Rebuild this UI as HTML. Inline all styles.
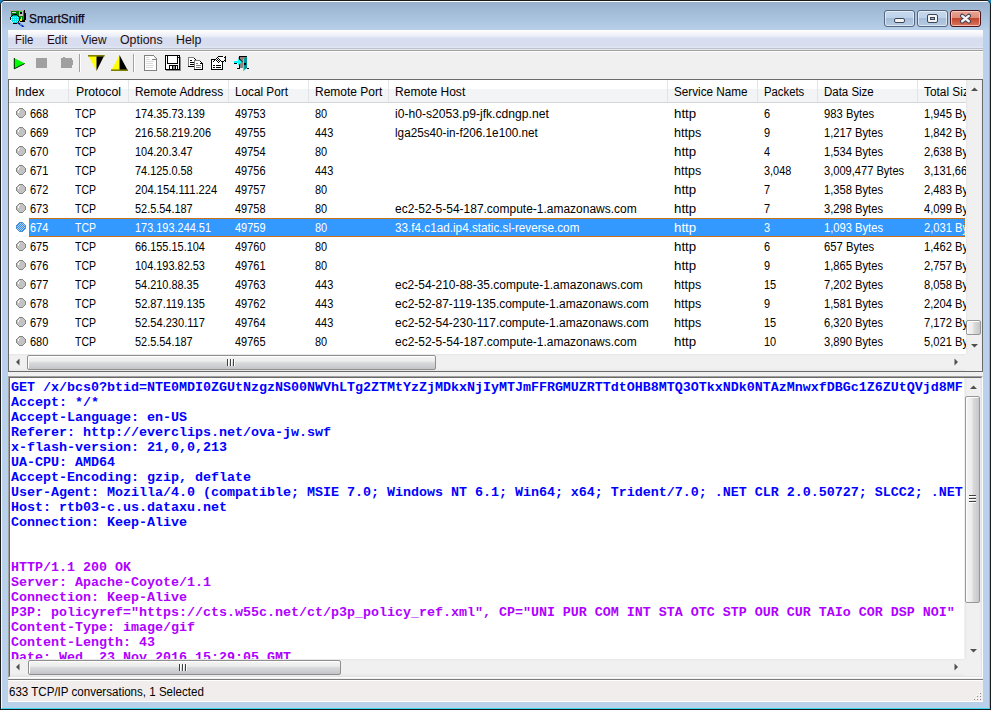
<!DOCTYPE html>
<html><head><meta charset="utf-8">
<style>
*{margin:0;padding:0;box-sizing:border-box}
html,body{width:991px;height:710px;overflow:hidden;background:#1787c6}
body{position:relative;font-family:"Liberation Sans",sans-serif;font-size:12px;color:#000}
.a{position:absolute;transform-origin:0 0}
#win{left:0;top:0;width:991px;height:710px;background:#1b1b1b;border-radius:5px 5px 0 0}
#frm{left:1px;top:1px;width:989px;height:708px;background:#b9d1ea;border-top:1px solid #fff;border-left:1px solid #f4f8fc;border-right:1px solid #3ad8f0;border-bottom:1px solid #3ad8f0;border-radius:4px 4px 0 0}
#title{left:2px;top:2px;width:987px;height:28px;border-radius:2px 2px 0 0;background:linear-gradient(#97b1ce,#b7cfe8)}
#menubar{left:8px;top:30px;width:975px;height:21px;background:linear-gradient(#fff 0,#f9fafd 2px,#eef1f8 5px,#e6eaf5 7px,#d8deef 8px,#d8deef 16px,#dfe5f3 17px,#dfe5f3 18px,#bcc2d0 18px,#bcc2d0 19px,#e9e9e9 19px,#e9e9e9 20px,#a0a0a0 20px)}
#toolbar{left:8px;top:51px;width:975px;height:28px;background:#f0f0f0;border-top:1px solid #fff}
.mi{top:33px;height:16px;line-height:16px;color:#1e0e14}
.ttl{font-size:12px;color:#0c0418;line-height:14px;-webkit-text-stroke:0.25px #0c0418}
.cb{top:10px;width:31px;height:17px;border:1px solid #56667e;border-radius:3px;background:linear-gradient(#c6d8ec 0,#bdd2ea 7px,#a5bdd9 7px,#b5cbe3 15px);box-shadow:inset 0 0 0 1px rgba(255,255,255,.55)}
.cbx{border-color:#4a1418;background:linear-gradient(#e9a595 0,#de8c7a 7px,#c0432a 7px,#d9765e 15px);box-shadow:inset 0 0 0 1px rgba(255,220,210,.7)}
/* list */
#list{left:8px;top:79px;width:975px;height:293px;border:1px solid #6a6a6a;background:#fff;overflow:hidden}
.hdr{left:9px;top:80px;width:957px;height:23px;background:linear-gradient(#fff 0,#fff 9px,#f3f4f6 9px,#f3f4f6 22px,#d5d5d5 22px)}
.hsep{top:80px;width:1px;height:22px;background:#e3e4e6}
.ht{transform-origin:0 0;top:85px;line-height:14px;height:14px;white-space:nowrap}
.rt{transform-origin:0 0;line-height:19px;height:19px;white-space:nowrap;top:0}
.st{color:#fff}
.selrow{left:29px;width:936px;height:19px;background:#3399ff;outline:1px dotted #c46a10;outline-offset:-1px}
.bul{left:16px;width:10px;height:10px}
.clipl{left:9px;top:80px;width:956px;height:274px;overflow:hidden}
/* scrollbars */
.vsb{width:17px;background:linear-gradient(90deg,#e6e6e6,#f0f0f0 2px,#f0f0f0 15px,#e8e8e8)}
.hsb{height:16px;background:linear-gradient(#e6e6e6,#f0f0f0 2px,#f0f0f0 14px,#e8e8e8)}
.vth{width:15px;border:1px solid #979797;border-radius:2px;background:linear-gradient(90deg,#f4f4f4,#ececec 45%,#dadada 55%,#c6c7ca);box-shadow:inset 1px 1px 0 #fff}
.hth{height:15px;border:1px solid #8f8f8f;border-radius:2px;background:linear-gradient(#f5f5f5,#ececec 40%,#dadbdd 50%,#c3c4c8);box-shadow:inset 1px 1px 0 #fff}
.corner{background:#f0f0f0}
/* text pane */
#tp{left:8px;top:376px;width:975px;height:302px;background:#fff;border-top:1px solid #a0a0a0;border-left:1px solid #a0a0a0;border-right:1px solid #fff;border-bottom:1px solid #fff}
#tpi{left:9px;top:377px;width:973px;height:300px;border-top:1px solid #696969;border-left:1px solid #696969;border-right:1px solid #e3e3e3;border-bottom:1px solid #e3e3e3}
.tclip{left:10px;top:378px;width:954px;height:281px;overflow:hidden}
pre{position:absolute;left:1px;top:2px;font-family:"Liberation Mono",monospace;font-weight:bold;font-size:13.333px;line-height:15px;color:#0000ff;white-space:pre}
.pu{color:#b000ff}
#status{left:8px;top:679px;width:975px;height:23px;background:#f0edec;border-top:1px solid #7c7c7c;border-bottom:1px solid #fff;box-shadow:inset 0 1px 0 #fff}
.stt{left:10px;top:684px;line-height:16px}
</style></head><body>
<div id="win" class="a"></div>
<div id="frm" class="a"></div>
<div id="title" class="a"></div>
<svg class="a" style="left:9px;top:9px" width="18" height="18" viewBox="0 0 18 18" shape-rendering="crispEdges">
<defs><pattern id="lensp" width="2" height="2" patternUnits="userSpaceOnUse"><rect width="2" height="2" fill="#00e4ee"/><rect width="1" height="1" fill="#ffffff"/></pattern></defs>
<rect x="1" y="1" width="14" height="1" fill="#b8a4a8"/>
<rect x="2" y="2" width="13" height="10" fill="#008000"/>
<rect x="15" y="1" width="1" height="12" fill="#000"/><rect x="16" y="4" width="1" height="7" fill="#000"/>
<rect x="10" y="2" width="4" height="5" fill="#c8c0c0"/>
<rect x="10" y="2" width="3" height="1" fill="#00ff00"/>
<rect x="11" y="3" width="2" height="2" fill="#000"/>
<rect x="14" y="2" width="1" height="9" fill="#00a000"/>
<rect x="2" y="3" width="1" height="1" fill="#ff0000"/><rect x="3" y="3" width="4" height="1" fill="#d8d0d8"/>
<rect x="12" y="8" width="1" height="3" fill="#c8c0c0"/>
<rect x="11" y="10" width="2" height="3" fill="#000"/><rect x="11" y="10" width="2" height="2" fill="#ffee00"/>
<rect x="12" y="12" width="4" height="1" fill="#000"/><rect x="13" y="11" width="2" height="1" fill="#000"/>
<path d="M4 5H8V6H9V7H10V8H11V12H10V13H9V14H8V15H4V14H3V13H2V12H1V8H2V7H3V6H4Z" fill="#000"/>
<path d="M4 6H8V7H9V8H10V12H9V13H8V14H4V13H3V12H2V8H3V7H4Z" fill="url(#lensp)"/>
<rect x="4" y="6" width="4" height="1" fill="#008888"/>
<rect x="1" y="11" width="1" height="1" fill="#fff"/><rect x="2" y="12" width="1" height="1" fill="#fff"/><rect x="3" y="13" width="1" height="1" fill="#e0e0e0"/>
<path d="M8 14 L10 13.5 L15.5 17.5 L13.5 18 Z" fill="#0000b0" shape-rendering="auto"/>
<path d="M10.5 15 L11.5 14.7 L13.5 16.3 L12.5 16.6 Z" fill="#40e8ff" shape-rendering="auto"/>
<rect x="8" y="13" width="2" height="1" fill="#505050"/>
</svg>
<div class="a ttl" style="left:29px;top:12px;transform:scaleX(0.993)">SmartSniff</div>
<div class="a cb" style="left:884px"></div>
<div class="a cb" style="left:917px"></div>
<div class="a cb cbx" style="left:950px"></div>
<div class="a" style="left:894px;top:18px;width:11px;height:5px;background:#f4f4f4;border:1px solid #3c4658;border-radius:2px"></div>
<div class="a" style="left:927px;top:14px;width:11px;height:9px;background:#f4f4f4;border:1px solid #3c4658;border-radius:2px"></div>
<div class="a" style="left:930px;top:17px;width:5px;height:3px;background:#9bb6d6;border:1px solid #3c4658"></div>
<svg class="a" style="left:959px;top:13px" width="13" height="11" viewBox="0 0 13 11">
<path d="M3.2 2.9 L9.8 8.3 M9.8 2.9 L3.2 8.3" stroke="#3b3f52" stroke-width="4.3" stroke-linecap="round" fill="none"/>
<path d="M3.2 2.9 L9.8 8.3 M9.8 2.9 L3.2 8.3" stroke="#f4f4f4" stroke-width="2.4" stroke-linecap="round" fill="none"/>
</svg>
<div id="menubar" class="a"></div>
<div class="a mi" style="left:15px;top:32px;transform:scaleX(0.949)">File</div><div class="a mi" style="left:47px;top:32px;transform:scaleX(0.982)">Edit</div><div class="a mi" style="left:81px;top:32px;transform:scaleX(0.990)">View</div><div class="a mi" style="left:120px;top:32px;transform:scaleX(1.029)">Options</div><div class="a mi" style="left:176px;top:32px;transform:scaleX(1.029)">Help</div>
<div id="toolbar" class="a"></div>
<svg class="a" style="left:0;top:0" width="260" height="80" shape-rendering="crispEdges"><defs><pattern id="chk" width="2" height="2" patternUnits="userSpaceOnUse"><rect width="2" height="2" fill="#fff"/><rect width="1" height="1" fill="#000"/><rect x="1" y="1" width="1" height="1" fill="#000"/></pattern></defs>
<path d="M14 58 L25 63.5 L14 69 Z" fill="#00ff00" shape-rendering="auto"/><path d="M14.3 58 V68.8 L24.6 63.6" fill="none" stroke="#002000" stroke-width="1" shape-rendering="auto"/>
<rect x="36" y="58" width="11" height="10" fill="#a0a0a0"/>
<rect x="61" y="58" width="11" height="10" fill="#a0a0a0"/>
<rect x="63" y="57" width="2" height="1" fill="#a0a0a0"/>
<rect x="72" y="60" width="1" height="5" fill="#a0a0a0"/>
<rect x="79" y="54" width="1" height="18" fill="#a0a0a0"/><rect x="80" y="54" width="1" height="18" fill="#fff"/>
<rect x="133" y="54" width="1" height="18" fill="#a0a0a0"/><rect x="134" y="54" width="1" height="18" fill="#fff"/>
<g shape-rendering="auto">
<path d="M88 55 L96.5 55 L96.5 71 Z" fill="#ffff00"/>
<path d="M96.5 55 L104.5 55 L96.5 71 Z" fill="#000"/>
<rect x="88" y="55" width="16.5" height="1.6" fill="#808000"/>
<path d="M119.5 55 L111 71 L119.5 71 Z" fill="#ffff00"/>
<path d="M119.5 55 L128 71 L119.5 71 Z" fill="#000"/>
<rect x="111" y="69.4" width="17" height="1.6" fill="#808000"/>
</g>
<!-- page -->
<rect x="144" y="55" width="10" height="1" fill="#808080"/>
<rect x="144" y="55" width="1" height="16" fill="#808080"/>
<rect x="145" y="56" width="11" height="14" fill="#fff"/>
<rect x="154" y="56" width="2" height="3" fill="#f0f0f0"/><rect x="155" y="58" width="1" height="1" fill="#f0f0f0"/>
<rect x="154" y="56" width="1" height="1" fill="#808080"/><rect x="155" y="57" width="1" height="1" fill="#808080"/><rect x="156" y="58" width="1" height="1" fill="#808080"/>
<rect x="152" y="59" width="5" height="1" fill="#808080"/>
<rect x="156" y="59" width="1" height="12" fill="#808080"/>
<rect x="144" y="70" width="13" height="1" fill="#808080"/>
<g fill="#dadada"><rect x="146" y="57" width="3" height="1"/><rect x="146" y="59" width="4" height="1"/><rect x="146" y="61" width="8" height="1"/><rect x="146" y="63" width="7" height="1"/><rect x="146" y="65" width="8" height="1"/><rect x="146" y="67" width="7" height="1"/></g>
<!-- floppy -->
<rect x="165" y="55" width="15" height="15" fill="#000"/>
<rect x="166" y="56" width="13" height="13" fill="#fff"/>
<rect x="167" y="56" width="11" height="8" fill="#000"/>
<rect x="168" y="56" width="9" height="7" fill="#fff"/>
<rect x="178" y="57" width="1" height="1" fill="#000"/>
<rect x="169" y="65" width="9" height="5" fill="#000"/>
<rect x="170" y="66" width="2" height="3" fill="#fff"/><rect x="173" y="66" width="2" height="3" fill="#888"/><rect x="176" y="66" width="1" height="3" fill="#fff"/>
<rect x="180" y="57" width="1" height="14" fill="#8a8a8a"/><rect x="166" y="70" width="15" height="1" fill="#8a8a8a"/>
<!-- copy -->
<rect x="188" y="57" width="6" height="1" fill="#808080"/>
<rect x="188" y="57" width="1" height="9" fill="#808080"/>
<rect x="189" y="58" width="5" height="8" fill="#fff"/>
<rect x="194" y="58" width="1" height="1" fill="#000"/><rect x="195" y="59" width="1" height="1" fill="#000"/>
<rect x="190" y="60" width="2" height="1" fill="#000"/><rect x="190" y="62" width="4" height="1" fill="#000"/><rect x="190" y="64" width="4" height="1" fill="#000"/>
<rect x="188" y="66" width="6" height="1" fill="#000"/>
<rect x="194" y="60" width="6" height="1" fill="#808080"/>
<rect x="194" y="60" width="1" height="10" fill="#808080"/>
<rect x="195" y="61" width="7" height="8" fill="#fff"/>
<rect x="200" y="61" width="1" height="1" fill="#000"/><rect x="201" y="62" width="1" height="1" fill="#000"/>
<rect x="200" y="63" width="2" height="1" fill="#000"/>
<rect x="202" y="63" width="1" height="7" fill="#000"/>
<rect x="194" y="69" width="9" height="1" fill="#000"/>
<g fill="#808080"><rect x="196" y="63" width="2" height="1"/><rect x="196" y="65" width="5" height="1"/><rect x="196" y="67" width="5" height="1"/></g>
<!-- properties -->
<rect x="211" y="59" width="12" height="11" fill="#000"/>
<rect x="212" y="60" width="10" height="9" fill="#fff"/>
<g fill="#000"><rect x="213" y="65" width="2" height="1"/><rect x="216" y="65" width="5" height="1"/><rect x="213" y="67" width="2" height="1"/><rect x="216" y="67" width="5" height="1"/></g>
<rect x="218" y="56" width="6" height="6" fill="#fff"/>
<rect x="218" y="56" width="5" height="1" fill="#000"/>
<rect x="221" y="61" width="3" height="1" fill="#000"/>
<rect x="224" y="57" width="1" height="1" fill="#000"/><rect x="224" y="60" width="1" height="1" fill="#000"/>
<rect x="225" y="56" width="1" height="6" fill="#0000a0"/>
<path d="M213 61H214V60H215V59H216V58H217V57H218V58H219V59H220V60H221V62H220V63H219V64H218V63H217V62H216V61H215V62H214V63H213Z" fill="url(#chk)"/>
<!-- exit -->
<rect x="239" y="56" width="8" height="1" fill="#000"/>
<rect x="239" y="56" width="1" height="13" fill="#000"/>
<rect x="240" y="57" width="6" height="11" fill="#8c8080"/>
<rect x="237" y="68" width="3" height="1" fill="#000"/><rect x="247" y="68" width="2" height="1" fill="#000"/>
<rect x="234" y="61" width="4" height="2" fill="#00ffff"/>
<rect x="234" y="63" width="3" height="1" fill="#000"/>
<path d="M238 58.5 L242 62 L238 65.5 Z" fill="#00ffff" shape-rendering="auto"/>
<path d="M238.5 58 L242.5 61.8" stroke="#000" stroke-width="1" shape-rendering="auto"/>
<path d="M243 59 L247 56.5 V68 L243 71 Z" fill="#008c8c" shape-rendering="auto"/>
<path d="M243 59 L244.2 58.2 V70.2 L243 71 Z" fill="#00ffff" shape-rendering="auto"/>
<rect x="244" y="63" width="2" height="2" fill="#000"/>
</svg>
<div id="list" class="a"></div>
<div class="a" style="left:0;top:0;width:966px;height:354px;overflow:hidden">
<div class="a hdr"></div>
<div class="a hsep" style="left:68px"></div>
<div class="a hsep" style="left:128px"></div>
<div class="a hsep" style="left:228px"></div>
<div class="a hsep" style="left:308px"></div>
<div class="a hsep" style="left:388px"></div>
<div class="a hsep" style="left:667px"></div>
<div class="a hsep" style="left:757px"></div>
<div class="a hsep" style="left:817px"></div>
<div class="a hsep" style="left:917px"></div>
<div class="a ht" style="left:15px;top:85px;transform:scaleX(1.001)">Index</div>
<div class="a ht" style="left:76px;top:85px;transform:scaleX(1.021)">Protocol</div>
<div class="a ht" style="left:135px;top:85px;transform:scaleX(0.993)">Remote Address</div>
<div class="a ht" style="left:235px;top:85px;transform:scaleX(0.979)">Local Port</div>
<div class="a ht" style="left:315px;top:85px;transform:scaleX(1.000)">Remote Port</div>
<div class="a ht" style="left:395px;top:85px;transform:scaleX(1.003)">Remote Host</div>
<div class="a ht" style="left:674px;top:85px;transform:scaleX(0.974)">Service Name</div>
<div class="a ht" style="left:764px;top:85px;transform:scaleX(0.943)">Packets</div>
<div class="a ht" style="left:824px;top:85px;transform:scaleX(0.955)">Data Size</div>
<div class="a ht" style="left:924px;top:85px;transform:scaleX(0.988)">Total Size</div>
<svg class="a" style="left:16px;top:108px" width="10" height="10" shape-rendering="crispEdges"><path d="M3 0H7V1H8V2H9V3H10V7H9V8H8V9H7V10H3V9H2V8H1V7H0V3H1V2H2V1H3Z" fill="#858585"/><path d="M3 1H7V2H8V3H9V7H8V8H7V9H3V8H2V7H1V3H2V2H3Z" fill="#c3c3c3"/><rect x="2" y="3" width="1" height="2" fill="#fff"/><rect x="3" y="2" width="1" height="1" fill="#fff"/></svg>
<div class="a rt" style="left:30px;top:105px;transform:scaleX(0.914)">668</div>
<div class="a rt" style="left:75px;top:105px;transform:scaleX(0.873)">TCP</div>
<div class="a rt" style="left:134.5px;top:105px;transform:scaleX(0.911)">174.35.73.139</div>
<div class="a rt" style="left:234.5px;top:105px;transform:scaleX(0.914)">49753</div>
<div class="a rt" style="left:314.5px;top:105px;transform:scaleX(0.913)">80</div>
<div class="a rt" style="left:394.5px;top:105px;transform:scaleX(1.011)">i0-h0-s2053.p9-jfk.cdngp.net</div>
<div class="a rt" style="left:673.7px;top:105px;transform:scaleX(1.106)">http</div>
<div class="a rt" style="left:763.7px;top:105px;transform:scaleX(0.912)">6</div>
<div class="a rt" style="left:823.7px;top:105px;transform:scaleX(0.937)">983 Bytes</div>
<div class="a rt" style="left:923.7px;top:105px;transform:scaleX(0.931)">1,945 Bytes</div>
<svg class="a" style="left:16px;top:127px" width="10" height="10" shape-rendering="crispEdges"><path d="M3 0H7V1H8V2H9V3H10V7H9V8H8V9H7V10H3V9H2V8H1V7H0V3H1V2H2V1H3Z" fill="#858585"/><path d="M3 1H7V2H8V3H9V7H8V8H7V9H3V8H2V7H1V3H2V2H3Z" fill="#c3c3c3"/><rect x="2" y="3" width="1" height="2" fill="#fff"/><rect x="3" y="2" width="1" height="1" fill="#fff"/></svg>
<div class="a rt" style="left:30px;top:124px;transform:scaleX(0.914)">669</div>
<div class="a rt" style="left:75px;top:124px;transform:scaleX(0.873)">TCP</div>
<div class="a rt" style="left:134.5px;top:124px;transform:scaleX(0.911)">216.58.219.206</div>
<div class="a rt" style="left:234.5px;top:124px;transform:scaleX(0.914)">49755</div>
<div class="a rt" style="left:314.5px;top:124px;transform:scaleX(0.914)">443</div>
<div class="a rt" style="left:394.5px;top:124px;transform:scaleX(0.977)">lga25s40-in-f206.1e100.net</div>
<div class="a rt" style="left:673.7px;top:124px;transform:scaleX(1.047)">https</div>
<div class="a rt" style="left:763.7px;top:124px;transform:scaleX(0.912)">9</div>
<div class="a rt" style="left:823.7px;top:124px;transform:scaleX(0.931)">1,217 Bytes</div>
<div class="a rt" style="left:923.7px;top:124px;transform:scaleX(0.931)">1,842 Bytes</div>
<svg class="a" style="left:16px;top:146px" width="10" height="10" shape-rendering="crispEdges"><path d="M3 0H7V1H8V2H9V3H10V7H9V8H8V9H7V10H3V9H2V8H1V7H0V3H1V2H2V1H3Z" fill="#858585"/><path d="M3 1H7V2H8V3H9V7H8V8H7V9H3V8H2V7H1V3H2V2H3Z" fill="#c3c3c3"/><rect x="2" y="3" width="1" height="2" fill="#fff"/><rect x="3" y="2" width="1" height="1" fill="#fff"/></svg>
<div class="a rt" style="left:30px;top:143px;transform:scaleX(0.914)">670</div>
<div class="a rt" style="left:75px;top:143px;transform:scaleX(0.873)">TCP</div>
<div class="a rt" style="left:134.5px;top:143px;transform:scaleX(0.910)">104.20.3.47</div>
<div class="a rt" style="left:234.5px;top:143px;transform:scaleX(0.914)">49754</div>
<div class="a rt" style="left:314.5px;top:143px;transform:scaleX(0.913)">80</div>
<div class="a rt" style="left:673.7px;top:143px;transform:scaleX(1.106)">http</div>
<div class="a rt" style="left:763.7px;top:143px;transform:scaleX(0.912)">4</div>
<div class="a rt" style="left:823.7px;top:143px;transform:scaleX(0.931)">1,534 Bytes</div>
<div class="a rt" style="left:923.7px;top:143px;transform:scaleX(0.931)">2,638 Bytes</div>
<svg class="a" style="left:16px;top:165px" width="10" height="10" shape-rendering="crispEdges"><path d="M3 0H7V1H8V2H9V3H10V7H9V8H8V9H7V10H3V9H2V8H1V7H0V3H1V2H2V1H3Z" fill="#858585"/><path d="M3 1H7V2H8V3H9V7H8V8H7V9H3V8H2V7H1V3H2V2H3Z" fill="#c3c3c3"/><rect x="2" y="3" width="1" height="2" fill="#fff"/><rect x="3" y="2" width="1" height="1" fill="#fff"/></svg>
<div class="a rt" style="left:30px;top:162px;transform:scaleX(0.914)">671</div>
<div class="a rt" style="left:75px;top:162px;transform:scaleX(0.873)">TCP</div>
<div class="a rt" style="left:134.5px;top:162px;transform:scaleX(0.910)">74.125.0.58</div>
<div class="a rt" style="left:234.5px;top:162px;transform:scaleX(0.914)">49756</div>
<div class="a rt" style="left:314.5px;top:162px;transform:scaleX(0.914)">443</div>
<div class="a rt" style="left:673.7px;top:162px;transform:scaleX(1.047)">https</div>
<div class="a rt" style="left:763.7px;top:162px;transform:scaleX(0.908)">3,048</div>
<div class="a rt" style="left:823.7px;top:162px;transform:scaleX(0.924)">3,009,477 Bytes</div>
<div class="a rt" style="left:923.7px;top:162px;transform:scaleX(0.924)">3,131,661 Bytes</div>
<svg class="a" style="left:16px;top:184px" width="10" height="10" shape-rendering="crispEdges"><path d="M3 0H7V1H8V2H9V3H10V7H9V8H8V9H7V10H3V9H2V8H1V7H0V3H1V2H2V1H3Z" fill="#858585"/><path d="M3 1H7V2H8V3H9V7H8V8H7V9H3V8H2V7H1V3H2V2H3Z" fill="#c3c3c3"/><rect x="2" y="3" width="1" height="2" fill="#fff"/><rect x="3" y="2" width="1" height="1" fill="#fff"/></svg>
<div class="a rt" style="left:30px;top:181px;transform:scaleX(0.914)">672</div>
<div class="a rt" style="left:75px;top:181px;transform:scaleX(0.873)">TCP</div>
<div class="a rt" style="left:134.5px;top:181px;transform:scaleX(0.930)">204.154.111.224</div>
<div class="a rt" style="left:234.5px;top:181px;transform:scaleX(0.914)">49757</div>
<div class="a rt" style="left:314.5px;top:181px;transform:scaleX(0.913)">80</div>
<div class="a rt" style="left:673.7px;top:181px;transform:scaleX(1.106)">http</div>
<div class="a rt" style="left:763.7px;top:181px;transform:scaleX(0.912)">7</div>
<div class="a rt" style="left:823.7px;top:181px;transform:scaleX(0.931)">1,358 Bytes</div>
<div class="a rt" style="left:923.7px;top:181px;transform:scaleX(0.931)">2,483 Bytes</div>
<svg class="a" style="left:16px;top:203px" width="10" height="10" shape-rendering="crispEdges"><path d="M3 0H7V1H8V2H9V3H10V7H9V8H8V9H7V10H3V9H2V8H1V7H0V3H1V2H2V1H3Z" fill="#858585"/><path d="M3 1H7V2H8V3H9V7H8V8H7V9H3V8H2V7H1V3H2V2H3Z" fill="#c3c3c3"/><rect x="2" y="3" width="1" height="2" fill="#fff"/><rect x="3" y="2" width="1" height="1" fill="#fff"/></svg>
<div class="a rt" style="left:30px;top:200px;transform:scaleX(0.914)">673</div>
<div class="a rt" style="left:75px;top:200px;transform:scaleX(0.873)">TCP</div>
<div class="a rt" style="left:134.5px;top:200px;transform:scaleX(0.910)">52.5.54.187</div>
<div class="a rt" style="left:234.5px;top:200px;transform:scaleX(0.914)">49758</div>
<div class="a rt" style="left:314.5px;top:200px;transform:scaleX(0.913)">80</div>
<div class="a rt" style="left:394.5px;top:200px;transform:scaleX(0.998)">ec2-52-5-54-187.compute-1.amazonaws.com</div>
<div class="a rt" style="left:673.7px;top:200px;transform:scaleX(1.106)">http</div>
<div class="a rt" style="left:763.7px;top:200px;transform:scaleX(0.912)">7</div>
<div class="a rt" style="left:823.7px;top:200px;transform:scaleX(0.931)">3,298 Bytes</div>
<div class="a rt" style="left:923.7px;top:200px;transform:scaleX(0.931)">4,099 Bytes</div>
<div class="a selrow" style="top:218px"></div>
<svg class="a" style="left:16px;top:222px" width="10" height="10" shape-rendering="crispEdges"><defs><pattern id="dith" width="2" height="2" patternUnits="userSpaceOnUse"><rect width="2" height="2" fill="#a8cdf4"/><rect width="1" height="1" fill="#3a8ee6"/><rect x="1" y="1" width="1" height="1" fill="#3a8ee6"/></pattern></defs><path d="M3 0H7V1H8V2H9V3H10V7H9V8H8V9H7V10H3V9H2V8H1V7H0V3H1V2H2V1H3Z" fill="#4a90e0"/><path d="M3 1H7V2H8V3H9V7H8V8H7V9H3V8H2V7H1V3H2V2H3Z" fill="url(#dith)"/></svg>
<div class="a rt st" style="left:30px;top:219px;transform:scaleX(0.914)">674</div>
<div class="a rt st" style="left:75px;top:219px;transform:scaleX(0.873)">TCP</div>
<div class="a rt st" style="left:134.5px;top:219px;transform:scaleX(0.911)">173.193.244.51</div>
<div class="a rt st" style="left:234.5px;top:219px;transform:scaleX(0.914)">49759</div>
<div class="a rt st" style="left:314.5px;top:219px;transform:scaleX(0.913)">80</div>
<div class="a rt st" style="left:394.5px;top:219px;transform:scaleX(0.977)">33.f4.c1ad.ip4.static.sl-reverse.com</div>
<div class="a rt st" style="left:673.7px;top:219px;transform:scaleX(1.106)">http</div>
<div class="a rt st" style="left:763.7px;top:219px;transform:scaleX(0.912)">3</div>
<div class="a rt st" style="left:823.7px;top:219px;transform:scaleX(0.931)">1,093 Bytes</div>
<div class="a rt st" style="left:923.7px;top:219px;transform:scaleX(0.931)">2,031 Bytes</div>
<svg class="a" style="left:16px;top:241px" width="10" height="10" shape-rendering="crispEdges"><path d="M3 0H7V1H8V2H9V3H10V7H9V8H8V9H7V10H3V9H2V8H1V7H0V3H1V2H2V1H3Z" fill="#858585"/><path d="M3 1H7V2H8V3H9V7H8V8H7V9H3V8H2V7H1V3H2V2H3Z" fill="#c3c3c3"/><rect x="2" y="3" width="1" height="2" fill="#fff"/><rect x="3" y="2" width="1" height="1" fill="#fff"/></svg>
<div class="a rt" style="left:30px;top:238px;transform:scaleX(0.914)">675</div>
<div class="a rt" style="left:75px;top:238px;transform:scaleX(0.873)">TCP</div>
<div class="a rt" style="left:134.5px;top:238px;transform:scaleX(0.911)">66.155.15.104</div>
<div class="a rt" style="left:234.5px;top:238px;transform:scaleX(0.914)">49760</div>
<div class="a rt" style="left:314.5px;top:238px;transform:scaleX(0.913)">80</div>
<div class="a rt" style="left:673.7px;top:238px;transform:scaleX(1.106)">http</div>
<div class="a rt" style="left:763.7px;top:238px;transform:scaleX(0.912)">6</div>
<div class="a rt" style="left:823.7px;top:238px;transform:scaleX(0.937)">657 Bytes</div>
<div class="a rt" style="left:923.7px;top:238px;transform:scaleX(0.931)">1,462 Bytes</div>
<svg class="a" style="left:16px;top:260px" width="10" height="10" shape-rendering="crispEdges"><path d="M3 0H7V1H8V2H9V3H10V7H9V8H8V9H7V10H3V9H2V8H1V7H0V3H1V2H2V1H3Z" fill="#858585"/><path d="M3 1H7V2H8V3H9V7H8V8H7V9H3V8H2V7H1V3H2V2H3Z" fill="#c3c3c3"/><rect x="2" y="3" width="1" height="2" fill="#fff"/><rect x="3" y="2" width="1" height="1" fill="#fff"/></svg>
<div class="a rt" style="left:30px;top:257px;transform:scaleX(0.914)">676</div>
<div class="a rt" style="left:75px;top:257px;transform:scaleX(0.873)">TCP</div>
<div class="a rt" style="left:134.5px;top:257px;transform:scaleX(0.911)">104.193.82.53</div>
<div class="a rt" style="left:234.5px;top:257px;transform:scaleX(0.914)">49761</div>
<div class="a rt" style="left:314.5px;top:257px;transform:scaleX(0.913)">80</div>
<div class="a rt" style="left:673.7px;top:257px;transform:scaleX(1.106)">http</div>
<div class="a rt" style="left:763.7px;top:257px;transform:scaleX(0.912)">9</div>
<div class="a rt" style="left:823.7px;top:257px;transform:scaleX(0.931)">1,865 Bytes</div>
<div class="a rt" style="left:923.7px;top:257px;transform:scaleX(0.931)">2,757 Bytes</div>
<svg class="a" style="left:16px;top:279px" width="10" height="10" shape-rendering="crispEdges"><path d="M3 0H7V1H8V2H9V3H10V7H9V8H8V9H7V10H3V9H2V8H1V7H0V3H1V2H2V1H3Z" fill="#858585"/><path d="M3 1H7V2H8V3H9V7H8V8H7V9H3V8H2V7H1V3H2V2H3Z" fill="#c3c3c3"/><rect x="2" y="3" width="1" height="2" fill="#fff"/><rect x="3" y="2" width="1" height="1" fill="#fff"/></svg>
<div class="a rt" style="left:30px;top:276px;transform:scaleX(0.914)">677</div>
<div class="a rt" style="left:75px;top:276px;transform:scaleX(0.873)">TCP</div>
<div class="a rt" style="left:134.5px;top:276px;transform:scaleX(0.910)">54.210.88.35</div>
<div class="a rt" style="left:234.5px;top:276px;transform:scaleX(0.914)">49763</div>
<div class="a rt" style="left:314.5px;top:276px;transform:scaleX(0.914)">443</div>
<div class="a rt" style="left:394.5px;top:276px;transform:scaleX(0.996)">ec2-54-210-88-35.compute-1.amazonaws.com</div>
<div class="a rt" style="left:673.7px;top:276px;transform:scaleX(1.047)">https</div>
<div class="a rt" style="left:763.7px;top:276px;transform:scaleX(0.913)">15</div>
<div class="a rt" style="left:823.7px;top:276px;transform:scaleX(0.931)">7,202 Bytes</div>
<div class="a rt" style="left:923.7px;top:276px;transform:scaleX(0.931)">8,058 Bytes</div>
<svg class="a" style="left:16px;top:298px" width="10" height="10" shape-rendering="crispEdges"><path d="M3 0H7V1H8V2H9V3H10V7H9V8H8V9H7V10H3V9H2V8H1V7H0V3H1V2H2V1H3Z" fill="#858585"/><path d="M3 1H7V2H8V3H9V7H8V8H7V9H3V8H2V7H1V3H2V2H3Z" fill="#c3c3c3"/><rect x="2" y="3" width="1" height="2" fill="#fff"/><rect x="3" y="2" width="1" height="1" fill="#fff"/></svg>
<div class="a rt" style="left:30px;top:295px;transform:scaleX(0.914)">678</div>
<div class="a rt" style="left:75px;top:295px;transform:scaleX(0.873)">TCP</div>
<div class="a rt" style="left:134.5px;top:295px;transform:scaleX(0.921)">52.87.119.135</div>
<div class="a rt" style="left:234.5px;top:295px;transform:scaleX(0.914)">49762</div>
<div class="a rt" style="left:314.5px;top:295px;transform:scaleX(0.914)">443</div>
<div class="a rt" style="left:394.5px;top:295px;transform:scaleX(0.997)">ec2-52-87-119-135.compute-1.amazonaws.com</div>
<div class="a rt" style="left:673.7px;top:295px;transform:scaleX(1.047)">https</div>
<div class="a rt" style="left:763.7px;top:295px;transform:scaleX(0.912)">9</div>
<div class="a rt" style="left:823.7px;top:295px;transform:scaleX(0.931)">1,581 Bytes</div>
<div class="a rt" style="left:923.7px;top:295px;transform:scaleX(0.931)">2,204 Bytes</div>
<svg class="a" style="left:16px;top:317px" width="10" height="10" shape-rendering="crispEdges"><path d="M3 0H7V1H8V2H9V3H10V7H9V8H8V9H7V10H3V9H2V8H1V7H0V3H1V2H2V1H3Z" fill="#858585"/><path d="M3 1H7V2H8V3H9V7H8V8H7V9H3V8H2V7H1V3H2V2H3Z" fill="#c3c3c3"/><rect x="2" y="3" width="1" height="2" fill="#fff"/><rect x="3" y="2" width="1" height="1" fill="#fff"/></svg>
<div class="a rt" style="left:30px;top:314px;transform:scaleX(0.914)">679</div>
<div class="a rt" style="left:75px;top:314px;transform:scaleX(0.873)">TCP</div>
<div class="a rt" style="left:134.5px;top:314px;transform:scaleX(0.921)">52.54.230.117</div>
<div class="a rt" style="left:234.5px;top:314px;transform:scaleX(0.914)">49764</div>
<div class="a rt" style="left:314.5px;top:314px;transform:scaleX(0.914)">443</div>
<div class="a rt" style="left:394.5px;top:314px;transform:scaleX(0.997)">ec2-52-54-230-117.compute-1.amazonaws.com</div>
<div class="a rt" style="left:673.7px;top:314px;transform:scaleX(1.047)">https</div>
<div class="a rt" style="left:763.7px;top:314px;transform:scaleX(0.913)">15</div>
<div class="a rt" style="left:823.7px;top:314px;transform:scaleX(0.931)">6,320 Bytes</div>
<div class="a rt" style="left:923.7px;top:314px;transform:scaleX(0.931)">7,172 Bytes</div>
<svg class="a" style="left:16px;top:336px" width="10" height="10" shape-rendering="crispEdges"><path d="M3 0H7V1H8V2H9V3H10V7H9V8H8V9H7V10H3V9H2V8H1V7H0V3H1V2H2V1H3Z" fill="#858585"/><path d="M3 1H7V2H8V3H9V7H8V8H7V9H3V8H2V7H1V3H2V2H3Z" fill="#c3c3c3"/><rect x="2" y="3" width="1" height="2" fill="#fff"/><rect x="3" y="2" width="1" height="1" fill="#fff"/></svg>
<div class="a rt" style="left:30px;top:333px;transform:scaleX(0.914)">680</div>
<div class="a rt" style="left:75px;top:333px;transform:scaleX(0.873)">TCP</div>
<div class="a rt" style="left:134.5px;top:333px;transform:scaleX(0.910)">52.5.54.187</div>
<div class="a rt" style="left:234.5px;top:333px;transform:scaleX(0.914)">49765</div>
<div class="a rt" style="left:314.5px;top:333px;transform:scaleX(0.913)">80</div>
<div class="a rt" style="left:394.5px;top:333px;transform:scaleX(0.998)">ec2-52-5-54-187.compute-1.amazonaws.com</div>
<div class="a rt" style="left:673.7px;top:333px;transform:scaleX(1.106)">http</div>
<div class="a rt" style="left:763.7px;top:333px;transform:scaleX(0.913)">10</div>
<div class="a rt" style="left:823.7px;top:333px;transform:scaleX(0.931)">3,890 Bytes</div>
<div class="a rt" style="left:923.7px;top:333px;transform:scaleX(0.931)">5,021 Bytes</div>
</div>
<!-- list v scrollbar -->
<div class="a vsb" style="left:966px;top:80px;height:274px;width:16px"></div>
<svg class="a" style="left:966px;top:80px" width="17" height="274">
<path d="M5 11 L8.5 7.5 L12 11 Z" fill="#505050"/>
<path d="M5 264 L8.5 267.5 L12 264 Z" fill="#505050"/>
</svg>
<div class="a vth" style="left:966px;top:320px;height:15px"></div>
<!-- list h scrollbar -->
<div class="a hsb" style="left:9px;top:354px;width:956px;height:17px"></div>
<svg class="a" style="left:9px;top:354px" width="956" height="17">
<path d="M10.5 4.5 L7 8 L10.5 11.5 Z" fill="#505050"/>
<path d="M945.5 4.5 L949 8 L945.5 11.5 Z" fill="#505050"/>
</svg>
<div class="a hth" style="left:27px;top:355px;width:409px"></div>
<svg class="a" style="left:226px;top:358px" width="10" height="9" shape-rendering="crispEdges">
<rect x="1" y="1" width="2" height="7" fill="#fff"/><rect x="4" y="1" width="2" height="7" fill="#fff"/><rect x="7" y="1" width="2" height="7" fill="#fff"/>
<rect x="1" y="1" width="1" height="7" fill="#404040"/><rect x="4" y="1" width="1" height="7" fill="#404040"/><rect x="7" y="1" width="1" height="7" fill="#404040"/>
</svg>
<div class="a corner" style="left:965px;top:354px;width:17px;height:17px"></div>
<!-- splitter -->
<div class="a" style="left:8px;top:372px;width:975px;height:4px;background:#f0f0f0"></div>
<!-- text pane -->
<div id="tp" class="a"></div>
<div id="tpi" class="a"></div>
<div class="a tclip"><pre>GET /x/bcs0?btid=NTE0MDI0ZGUtNzgzNS00NWVhLTg2ZTMtYzZjMDkxNjIyMTJmFFRGMUZRTTdtOHB8MTQ3OTkxNDk0NTAzMnwxfDBGc1Z6ZUtQVjd8MF
Accept: */*
Accept-Language: en-US
Referer: http://everclips.net/ova-jw.swf
x-flash-version: 21,0,0,213
UA-CPU: AMD64
Accept-Encoding: gzip, deflate
User-Agent: Mozilla/4.0 (compatible; MSIE 7.0; Windows NT 6.1; Win64; x64; Trident/7.0; .NET CLR 2.0.50727; SLCC2; .NET
Host: rtb03-c.us.dataxu.net
Connection: Keep-Alive


<span class="pu">HTTP/1.1 200 OK
Server: Apache-Coyote/1.1
Connection: Keep-Alive
P3P: policyref="https://cts.w55c.net/ct/p3p_policy_ref.xml", CP="UNI PUR COM INT STA OTC STP OUR CUR TAIo COR DSP NOI"
Content-Type: image/gif
Content-Length: 43
Date: Wed, 23 Nov 2016 15:29:05 GMT</span></pre></div>
<!-- text v scrollbar -->
<div class="a vsb" style="left:964px;top:378px;height:281px;background:#f0f0f0"></div><div class="a vsb" style="left:965px;top:378px;height:281px;width:16px"></div>
<svg class="a" style="left:964px;top:378px" width="17" height="281">
<path d="M6 11 L9.5 7.5 L13 11 Z" fill="#505050"/>
<path d="M6 271 L9.5 274.5 L13 271 Z" fill="#505050"/>
</svg>
<div class="a vth" style="left:965px;top:396px;height:207px"></div>
<svg class="a" style="left:968px;top:494px" width="9" height="10" shape-rendering="crispEdges">
<rect x="1" y="1" width="7" height="2" fill="#fff"/><rect x="1" y="4" width="7" height="2" fill="#fff"/><rect x="1" y="7" width="7" height="2" fill="#fff"/>
<rect x="1" y="1" width="7" height="1" fill="#404040"/><rect x="1" y="4" width="7" height="1" fill="#404040"/><rect x="1" y="7" width="7" height="1" fill="#404040"/>
</svg>
<!-- text h scrollbar -->
<div class="a hsb" style="left:10px;top:659px;width:954px;height:17px"></div>
<svg class="a" style="left:10px;top:659px" width="954" height="17">
<path d="M9.5 4.5 L6 8 L9.5 11.5 Z" fill="#505050"/>
<path d="M944.5 4.5 L948 8 L944.5 11.5 Z" fill="#505050"/>
</svg>
<div class="a hth" style="left:28px;top:660px;width:313px"></div>
<svg class="a" style="left:178px;top:663px" width="10" height="9" shape-rendering="crispEdges">
<rect x="1" y="1" width="2" height="7" fill="#fff"/><rect x="4" y="1" width="2" height="7" fill="#fff"/><rect x="7" y="1" width="2" height="7" fill="#fff"/>
<rect x="1" y="1" width="1" height="7" fill="#404040"/><rect x="4" y="1" width="1" height="7" fill="#404040"/><rect x="7" y="1" width="1" height="7" fill="#404040"/>
</svg>
<div class="a corner" style="left:964px;top:659px;width:17px;height:17px"></div>
<!-- status -->
<div class="a" style="left:8px;top:678px;width:975px;height:1px;background:#f0f0f0"></div>
<div id="status" class="a"></div>
<div class="a stt" style="left:9px;top:684px;transform:scaleX(0.963)">633 TCP/IP conversations, 1 Selected</div>
<svg class="a" style="left:971px;top:692px" width="12" height="12" shape-rendering="crispEdges">
<g fill="#fff"><rect x="8" y="0" width="1" height="1"/><rect x="5" y="3" width="1" height="1"/><rect x="8" y="3" width="1" height="1"/><rect x="2" y="6" width="1" height="1"/><rect x="5" y="6" width="1" height="1"/><rect x="8" y="6" width="1" height="1"/></g>
<g fill="#8a8a8a"><rect x="9" y="1" width="1" height="1"/><rect x="6" y="4" width="1" height="1"/><rect x="9" y="4" width="1" height="1"/><rect x="3" y="7" width="1" height="1"/><rect x="6" y="7" width="1" height="1"/><rect x="9" y="7" width="1" height="1"/></g>
</svg>
</body></html>
